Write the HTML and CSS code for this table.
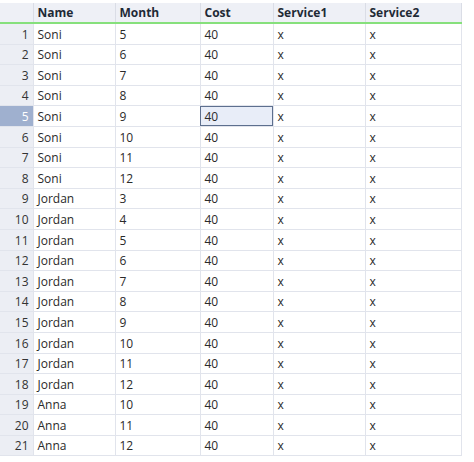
FILE: index.html
```html
<!DOCTYPE html>
<html>
<head>
<meta charset="utf-8">
<link rel="stylesheet" href="styles.css">
</head>
<body>
<table class="grid">
  <colgroup>
    <col class="c-num"><col class="c-name"><col class="c-month"><col class="c-cost"><col class="c-s1"><col class="c-s2">
  </colgroup>
  <thead>
    <tr><th class="corner"></th><th>Name</th><th>Month</th><th>Cost</th><th>Service1</th><th>Service2</th></tr>
  </thead>
  <tbody>
    <tr><td class="num">1</td><td>Soni</td><td>5</td><td>40</td><td>x</td><td>x</td></tr>
    <tr><td class="num">2</td><td>Soni</td><td>6</td><td>40</td><td>x</td><td>x</td></tr>
    <tr><td class="num">3</td><td>Soni</td><td>7</td><td>40</td><td>x</td><td>x</td></tr>
    <tr><td class="num">4</td><td>Soni</td><td>8</td><td>40</td><td>x</td><td>x</td></tr>
    <tr><td class="num sel">5</td><td>Soni</td><td>9</td><td class="active">40</td><td>x</td><td>x</td></tr>
    <tr><td class="num">6</td><td>Soni</td><td>10</td><td>40</td><td>x</td><td>x</td></tr>
    <tr><td class="num">7</td><td>Soni</td><td>11</td><td>40</td><td>x</td><td>x</td></tr>
    <tr><td class="num">8</td><td>Soni</td><td>12</td><td>40</td><td>x</td><td>x</td></tr>
    <tr><td class="num">9</td><td>Jordan</td><td>3</td><td>40</td><td>x</td><td>x</td></tr>
    <tr><td class="num">10</td><td>Jordan</td><td>4</td><td>40</td><td>x</td><td>x</td></tr>
    <tr><td class="num">11</td><td>Jordan</td><td>5</td><td>40</td><td>x</td><td>x</td></tr>
    <tr><td class="num">12</td><td>Jordan</td><td>6</td><td>40</td><td>x</td><td>x</td></tr>
    <tr><td class="num">13</td><td>Jordan</td><td>7</td><td>40</td><td>x</td><td>x</td></tr>
    <tr><td class="num">14</td><td>Jordan</td><td>8</td><td>40</td><td>x</td><td>x</td></tr>
    <tr><td class="num">15</td><td>Jordan</td><td>9</td><td>40</td><td>x</td><td>x</td></tr>
    <tr><td class="num">16</td><td>Jordan</td><td>10</td><td>40</td><td>x</td><td>x</td></tr>
    <tr><td class="num">17</td><td>Jordan</td><td>11</td><td>40</td><td>x</td><td>x</td></tr>
    <tr><td class="num">18</td><td>Jordan</td><td>12</td><td>40</td><td>x</td><td>x</td></tr>
    <tr><td class="num">19</td><td>Anna</td><td>10</td><td>40</td><td>x</td><td>x</td></tr>
    <tr><td class="num">20</td><td>Anna</td><td>11</td><td>40</td><td>x</td><td>x</td></tr>
    <tr><td class="num">21</td><td>Anna</td><td>12</td><td>40</td><td>x</td><td>x</td></tr>
  </tbody>
</table>
</body>
</html>
```
FILE: styles.css
```css
html, body {
  margin: 0;
  padding: 0;
  background: #ffffff;
}
body {
  font-family: "Open Sans", "Noto Sans", sans-serif;
  font-size: 12px;
  color: #222;
}
.grid {
  border-collapse: collapse;
  table-layout: fixed;
  width: 461px;
  margin-top: 3px;
}
.c-num { width: 33px; }
.c-name { width: 82px; }
.c-month { width: 85px; }
.c-cost { width: 73px; }
.c-s1 { width: 92px; }
.c-s2 { width: 96px; }
.grid th {
  height: 19px;
  padding: 0 0 0 4px;
  text-align: left;
  font-weight: 700;
  background: #eef0f6;
  border-left: 1px solid #dadde6;
  border-right: 1px solid #dadde6;
  border-bottom: 2px solid #86e07c;
  color: #1f2a36;
  line-height: 19px;
}
.grid th.corner {
  border-left: none;
}
.grid td {
  height: 19.6px;
  padding: 0 0 0 4px;
  border: 1px solid #e1e4ec;
  line-height: 18px;
  vertical-align: bottom;
  white-space: nowrap;
  color: #2a2a2a;
}
.grid td.num {
  text-align: right;
  padding: 0 4px 0 0;
  background: #eceef4;
  border-left: none;
  border-color: #e1e4ec;
  color: #333;
}
.grid td.num.sel {
  background: #9fb0cf;
  color: #ffffff;
}
.grid td.active {
  background: #e8edf8;
  outline: 1px solid #5d6f8e;
  outline-offset: -1px;
}
```
